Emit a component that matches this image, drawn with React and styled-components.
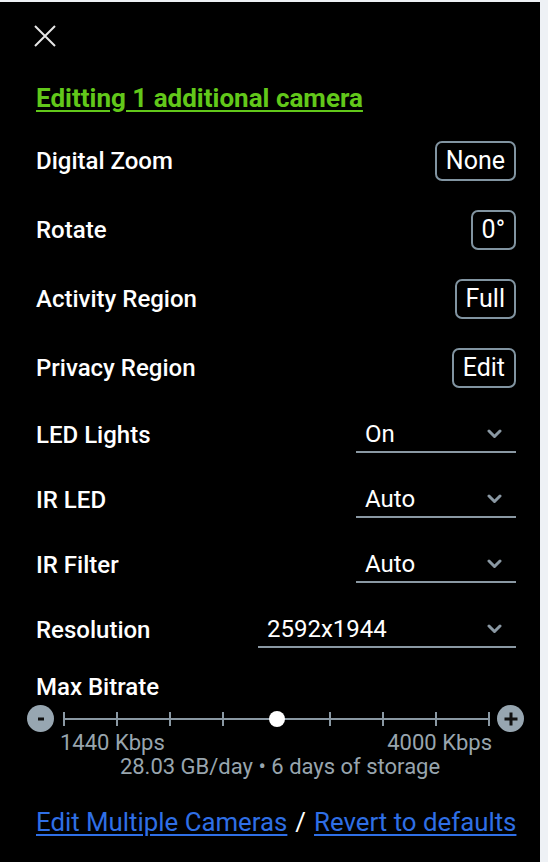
import React from "react";
import styled, { createGlobalStyle } from "styled-components";

const Global = createGlobalStyle`
  html, body { margin: 0; padding: 0; background: #eef1f5; }
  body { font-family: Roboto, "Liberation Sans", sans-serif; }
`;

const Panel = styled.div`
  width: 540px;
  height: 860px;
  margin-top: 2px;
  background: #000;
  color: #fff;
  box-sizing: border-box;
  padding: 0 24px 0 36px;
  display: flex;
  flex-direction: column;
  & > * { flex-shrink: 0; }
`;

const CloseBtn = styled.button`
  width: 22px;
  height: 22px;
  margin: 23px 0 0 -2px;
  padding: 0;
  background: none;
  border: 0;
  display: flex;
  color: #e6e6e6;
`;

const Title = styled.a`
  margin-top: 37px;
  font-size: 26px;
  line-height: 28px;
  font-weight: 700;
  color: #62c81a;
  text-decoration: underline;
  text-underline-offset: 3px;
  align-self: flex-start;
`;

const Spacer = styled.div`
  height: 14px;
`;

const Row = styled.div`
  height: ${(p) => p.$h}px;
  display: flex;
  align-items: center;
  justify-content: space-between;
`;

const Label = styled.span`
  font-size: 24px;
  font-weight: 500;
  color: #fff;
`;

const OutlineBtn = styled.button`
  height: 40px;
  box-sizing: border-box;
  padding: 0 9px;
  border: 2px solid #8194a1;
  border-radius: 7px;
  background: transparent;
  color: #fff;
  font-family: inherit;
  font-size: 25px;
  line-height: 1;
`;

const Select = styled.div`
  width: ${(p) => p.$w}px;
  height: 36px;
  box-sizing: border-box;
  border-bottom: 2px solid #8a98a3;
  display: flex;
  align-items: center;
  justify-content: space-between;
  padding: 0 14px 0 9px;
  font-size: 24px;
  color: #fff;
`;

const Chevron = () => (
  <svg width="15" height="10" viewBox="0 0 15 10">
    <path d="M2 2 L7.5 7.5 L13 2" fill="none" stroke="#8a98a3" strokeWidth="3" strokeLinecap="round" strokeLinejoin="round" />
  </svg>
);

const BitrateLabel = styled.div`
  margin-top: 12px;
  font-size: 24px;
  font-weight: 500;
  line-height: 26px;
`;

const SliderRow = styled.div`
  margin: 5px -17px 0 -9px;
  display: flex;
  align-items: center;
  & > * { flex: none; }
`;

const RoundBtn = styled.div`
  width: 27px;
  height: 27px;
  border-radius: 50%;
  background: #97a6b1;
  display: flex;
  align-items: center;
  justify-content: center;
`;

const Track = styled.div`
  position: relative;
  width: 427px;
  height: 16px;
  margin: 0 7px 0 9px;
  display: flex;
  align-items: center;
  justify-content: space-between;
  &::before {
    content: "";
    position: absolute;
    left: 0;
    right: 0;
    top: 7px;
    height: 2px;
    background: #8a98a3;
  }
`;

const Tick = styled.span`
  width: 2px;
  height: 14px;
  background: #8a98a3;
  position: relative;
`;

const Thumb = styled.span`
  width: 16px;
  height: 16px;
  margin: 0 -7px;
  border-radius: 50%;
  background: #fff;
  position: relative;
  z-index: 1;
`;

const RangeLabels = styled.div`
  margin: -1px 0 0 24px;
  width: 432px;
  display: flex;
  justify-content: space-between;
  font-size: 22px;
  line-height: 24px;
  color: #98a5ae;
`;

const Storage = styled.div`
  width: 488px;
  text-align: center;
  font-size: 22px;
  line-height: 24px;
  color: #98a5ae;
`;

const Links = styled.div`
  margin-top: 28px;
  font-size: 25.8px;
  line-height: 30px;
  color: #fff;
  display: flex;
  gap: 8px;
  white-space: nowrap;
`;

const Link = styled.a`
  color: #2f6fe6;
  text-decoration: underline;
  text-underline-offset: 3px;
`;

const buttons = [
  ["Digital Zoom", "None"],
  ["Rotate", "0°"],
  ["Activity Region", "Full"],
  ["Privacy Region", "Edit"],
];

const selects = [
  ["LED Lights", "On", 160],
  ["IR LED", "Auto", 160],
  ["IR Filter", "Auto", 160],
  ["Resolution", "2592x1944", 258],
];

export default function App() {
  const ticks = [0, 1, 2, 3, "t", 5, 6, 7, 8];
  return (
    <>
      <Global />
      <Panel>
        <CloseBtn aria-label="Close">
          <svg width="22" height="22" viewBox="0 0 22 22">
            <path d="M1 1 L21 21 M21 1 L1 21" stroke="currentColor" strokeWidth="2" />
          </svg>
        </CloseBtn>
        <Title>Editting 1 additional camera</Title>
        <Spacer />
        {buttons.map(([l, b]) => (
          <Row key={l} $h={69}>
            <Label>{l}</Label>
            <OutlineBtn>{b}</OutlineBtn>
          </Row>
        ))}
        {selects.map(([l, v, w]) => (
          <Row key={l} $h={65}>
            <Label>{l}</Label>
            <Select $w={w}>
              <span>{v}</span>
              <Chevron />
            </Select>
          </Row>
        ))}
        <BitrateLabel>Max Bitrate</BitrateLabel>
        <SliderRow>
          <RoundBtn>
            <svg width="8" height="4" viewBox="0 0 8 4"><rect x="1" y="0.5" width="6" height="3" fill="#111" /></svg>
          </RoundBtn>
          <Track>
            {ticks.map((t) => (t === "t" ? <Thumb key={t} /> : <Tick key={t} />))}
          </Track>
          <RoundBtn>
            <svg width="16" height="16" viewBox="0 0 16 16"><path d="M8 1.5 V14.5 M1.5 8 H14.5" stroke="#111" strokeWidth="3" /></svg>
          </RoundBtn>
        </SliderRow>
        <RangeLabels>
          <span>1440 Kbps</span>
          <span>4000 Kbps</span>
        </RangeLabels>
        <Storage>28.03 GB/day • 6 days of storage</Storage>
        <Links>
          <Link>Edit Multiple Cameras</Link>
          <span>/</span>
          <Link>Revert to defaults</Link>
        </Links>
      </Panel>
    </>
  );
}
